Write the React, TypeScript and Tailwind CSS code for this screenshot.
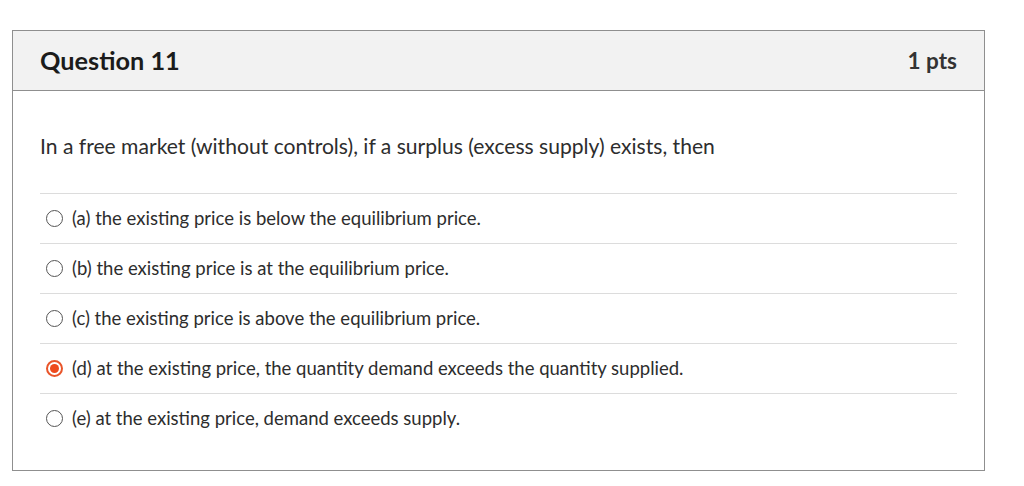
const answers = [
  { id: "a", text: "(a) the existing price is below the equilibrium price." },
  { id: "b", text: "(b) the existing price is at the equilibrium price." },
  { id: "c", text: "(c) the existing price is above the equilibrium price." },
  { id: "d", text: "(d) at the existing price, the quantity demand exceeds the quantity supplied." },
  { id: "e", text: "(e) at the existing price, demand exceeds supply." },
];

function Radio({ checked }: { checked: boolean }) {
  if (checked) {
    return (
      <span className="flex h-[17px] w-[17px] shrink-0 items-center justify-center rounded-full border-2 border-[#e9552a] bg-white">
        <span className="h-[9px] w-[9px] rounded-full bg-[#ee4a1c]" />
      </span>
    );
  }
  return <span className="h-[17px] w-[17px] shrink-0 rounded-full border border-[#555] bg-white" />;
}

export default function App() {
  return (
    <div className="h-[486px] w-[1024px] bg-white pt-[30px] pl-[12px] font-['Lato','Liberation_Sans',sans-serif] text-[#2d3b45]">
      <div className="w-[973px] border border-[#8f8f8f]">
        <div className="flex h-[60px] items-center justify-between border-b border-[#8f8f8f] bg-[#f2f2f2] pr-[27px] pl-[27px]">
          <h2 className="text-[25.3px] font-bold text-[#1b1b1b]">Question 11</h2>
          <span className="text-[22.5px] font-bold text-[#333]">1 pts</span>
        </div>
        <div className="px-[27px] pt-[40px] pb-[27px]">
          <p className="mb-[32px] text-[21.1px] leading-[30px] text-[#2d2d2d]">
            In a free market (without controls), if a surplus (excess supply) exists, then
          </p>
          <div>
            {answers.map((a) => (
              <div
                key={a.id}
                className="flex h-[50px] items-center gap-[9px] border-t border-[#dcdcdc] pl-[6px]"
              >
                <Radio checked={a.id === "d"} />
                <span className="text-[18.5px] text-[#2d2d2d]">{a.text}</span>
              </div>
            ))}
          </div>
        </div>
      </div>
    </div>
  );
}
